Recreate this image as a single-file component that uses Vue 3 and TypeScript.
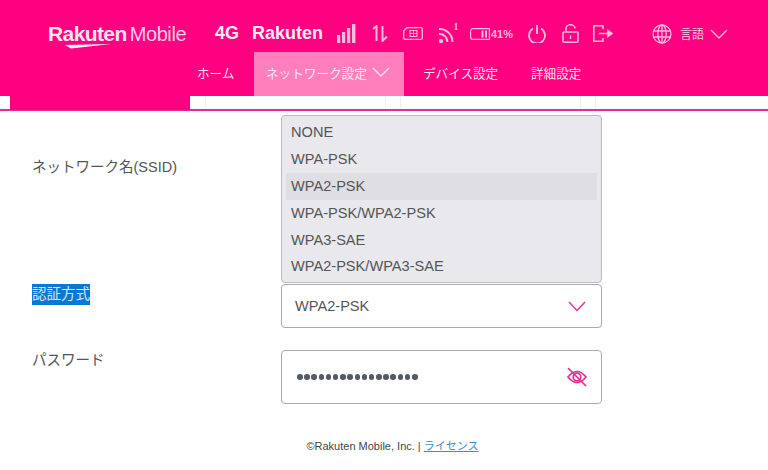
<script setup lang="ts">
const options: string[] = ['NONE', 'WPA-PSK', 'WPA2-PSK', 'WPA-PSK/WPA2-PSK', 'WPA3-SAE', 'WPA2-PSK/WPA3-SAE']
const selected = 'WPA2-PSK'
const navItems = [
  { label: 'ホーム', cls: 'home' },
  { label: 'ネットワーク設定', cls: 'network active', arrow: true },
  { label: 'デバイス設定', cls: 'device' },
  { label: '詳細設定', cls: 'detail' },
]
</script>

<template>
  <div class="page">
    <header class="header">
      <div class="top">
        <div class="logo"><span class="rakuten">Rakuten</span><span class="mobile">Mobile</span>
          <svg class="swoosh" width="46" height="5" viewBox="0 0 46 5"><path d="M0 1 L46 0 L6 4.5 Z" fill="#fff" /></svg>
        </div>
        <span class="net">4G</span>
        <span class="carrier">Rakuten</span>
        <svg class="ic signal" width="19" height="19" viewBox="0 0 19 19" fill="#fbd">
          <rect x="0" y="11" width="3.2" height="8" /><rect x="5" y="8" width="3.2" height="11" /><rect x="10" y="4" width="3.2" height="15" /><rect x="15" y="0" width="3.4" height="19" />
        </svg>
        <svg class="ic updown" width="16" height="17" viewBox="0 0 16 17" fill="none" stroke="#fbd" stroke-width="2">
          <path d="M1 4 L4.5 1 V16" /><path d="M10.5 1 V16 L15 11.5" />
        </svg>
        <svg class="ic sim" width="20" height="13" viewBox="0 0 20 13" fill="none" stroke="#fbd" stroke-width="1.3">
          <path d="M4 .7 H18 a1.3 1.3 0 0 1 1.3 1.3 V11 a1.3 1.3 0 0 1 -1.3 1.3 H2 a1.3 1.3 0 0 1 -1.3 -1.3 V4 Z" /><rect x="7" y="3.5" width="7" height="6" stroke-width="1" /><path d="M7 6.5 H14 M10.5 3.5 V9.5" stroke-width=".8" />
        </svg>
        <svg class="ic wifi" width="20" height="21" viewBox="0 0 20 21" fill="none" stroke="#fbd" stroke-width="2">
          <circle cx="3" cy="18" r="2.2" fill="#fbd" stroke="none" />
          <path d="M1 11 a8 8 0 0 1 8.5 8" /><path d="M1 6 a13 13 0 0 1 13.5 13" />
          <text x="15.5" y="7" class="wifi-num">1</text>
        </svg>
        <svg class="ic battery" width="20" height="12" viewBox="0 0 20 12" fill="none" stroke="#fbd" stroke-width="1.2">
          <path d="M3 .6 H19.4 V11.4 H3 a2.4 2.4 0 0 1 -2.4 -2.4 V3 a2.4 2.4 0 0 1 2.4 -2.4 Z" />
          <path d="M12.5 2.5 V9.5 M16 2.5 V9.5" stroke-width="2" />
        </svg>
        <span class="pct">41%</span>
        <svg class="ic power" width="18" height="18" viewBox="0 0 18 18" fill="none" stroke="#fbd" stroke-width="1.8">
          <path d="M5 3.5 a8 8 0 1 0 8 0" /><path d="M9 0 V9" />
        </svg>
        <svg class="ic lock" width="17" height="19" viewBox="0 0 17 19" fill="none" stroke="#fbd" stroke-width="1.5">
          <rect x="1" y="8" width="15" height="10.2" rx="1" /><path d="M4 8 V4.5 a4.5 3.8 0 0 1 9 0" /><path d="M8.5 11.5 V15" />
        </svg>
        <svg class="ic logout" width="20" height="17" viewBox="0 0 20 17" fill="none" stroke="#fbd" stroke-width="1.5">
          <path d="M10 4 V.8 H.8 V16.2 H10 V13" /><path d="M6 8.5 H15" /><path d="M15 5.5 L19 8.5 L15 11.5 Z" fill="#fbd" />
        </svg>
        <svg class="ic globe" width="20" height="20" viewBox="0 0 20 20" fill="none" stroke="#fbd" stroke-width="1.3">
          <circle cx="10" cy="10" r="9" /><ellipse cx="10" cy="10" rx="4.2" ry="9" /><path d="M10 1 V19 M1.5 7 H18.5 M1.5 13 H18.5" />
        </svg>
        <span class="lang">言語</span>
        <svg class="lang-arrow" width="18" height="10" viewBox="0 0 18 10" fill="none" stroke="#fbd" stroke-width="1.4"><path d="M1 1 L9 9 L17 1" /></svg>
      </div>
      <nav class="nav">
        <a v-for="item in navItems" :key="item.label" :class="['nav-item', item.cls]">
          {{ item.label }}
          <svg v-if="item.arrow" class="nav-arrow" width="18" height="10" viewBox="0 0 18 10" fill="none" stroke="#ffe0ee" stroke-width="1.4"><path d="M1 1 L9 9 L17 1" /></svg>
        </a>
      </nav>
    </header>
    <div class="strip">
      <div class="strip-block"></div>
      <div class="strip-cell c1"></div>
      <div class="strip-cell c2"></div>
      <div class="strip-cell c3"></div>
      <div class="strip-cell c4"></div>
      <div class="strip-cell c5"></div>
    </div>
    <main class="form">
      <div class="row first">
        <label class="label ssid">ネットワーク名(SSID)</label>
        <ul class="list">
          <li v-for="o in options" :key="o" :class="{ sel: o === selected }">{{ o }}</li>
        </ul>
      </div>
      <div class="row second">
        <label class="label auth"><span class="highlight">認証方式</span></label>
        <div class="control select">
          <span>WPA2-PSK</span>
          <svg width="18" height="11" viewBox="0 0 18 11" fill="none" stroke="#e6308f" stroke-width="1.5"><path d="M1 1 L9 9.5 L17 1" /></svg>
        </div>
      </div>
      <div class="row third">
        <label class="label pw">パスワード</label>
        <div class="control password">
          <span class="dots"><i v-for="n in 17" :key="n"></i></span>
          <svg width="20" height="20" viewBox="0 0 20 20" fill="none" stroke="#e6308f" stroke-width="1.7">
            <path d="M1 10 Q10 -1 19 10 Q10 21 1 10 Z" /><circle cx="10" cy="10" r="3.8" /><path d="M1 1 L19 19" />
          </svg>
        </div>
      </div>
    </main>
    <footer class="footer">©Rakuten Mobile, Inc. | <a class="license">ライセンス</a></footer>
  </div>
</template>

<style>
html, body { margin: 0; background: #fff; }
</style>

<style scoped>
.page {
  width: 768px;
  height: 470px;
  overflow: hidden;
  background: #fff;
  font-family: "Liberation Sans", "Noto Sans CJK JP", sans-serif;
  color: #555;
}
.header { height: 96px; background: #ff0080; display: flex; flex-direction: column; }
.top { height: 52px; display: flex; align-items: center; padding-left: 48px; padding-top: 15px; box-sizing: border-box; color: #fff; }
.logo { width: 167px; position: relative; color: #fbe6f0; white-space: nowrap; }
.rakuten { font-size: 21px; font-weight: 700; letter-spacing: -0.6px; }
.mobile { font-size: 20px; margin-left: 3px; letter-spacing: -0.4px; color: #fbcfe4; }
.swoosh { position: absolute; left: 17px; top: 22px; }
.net { font-size: 18px; font-weight: 700; width: 37px; color: #fdeef5; }
.carrier { font-size: 18px; font-weight: 700; width: 85px; color: #fdeef5; }
.ic { flex: none; }
.signal { margin-right: 16px; }
.updown { margin-right: 15px; }
.sim { margin-right: 15px; }
.wifi { margin-right: 12px; overflow: visible; }
.wifi-num { font-size: 10px; fill: #fbd; stroke: none; font-family: "Liberation Serif", serif; font-weight: 700; }
.pct { font-size: 11px; font-weight: 700; margin-left: 1px; width: 37px; color: #fbd; }
.power { margin-right: 16px; }
.lock { margin-right: 14px; }
.logout { margin-right: 39px; }
.lang { font-size: 12px; margin-left: 8px; color: #fbcfe4; }
.lang-arrow { margin-left: 6px; }
.nav { height: 44px; display: flex; padding-left: 197px; }
.nav-item { display: flex; align-items: center; font-size: 12.6px; color: #fde3ef; white-space: nowrap; padding-bottom: 4px; box-sizing: border-box; }
.home { width: 57px; }
.network { width: 150px; background: #ff7fbd; padding-left: 12px; color: #ffe6f2; }
.device { margin-left: 19px; width: 108px; }
.nav-arrow { margin-left: 5px; }
.strip { height: 15px; display: flex; box-sizing: border-box; border-bottom: 2px solid #e6308f; }
.strip-block { width: 180px; margin-left: 10px; height: 14px; background: #ff0080; }
.strip-cell { height: 12px; border-left: 1px solid #eee; box-sizing: border-box; }
.c1 { margin-left: 15px; width: 180px; }
.c2 { width: 15px; }
.c3 { width: 180px; }
.c4 { width: 15px; }
.c5 { flex: 1; }
.form { padding: 4px 166px 0 32px; }
.row { display: grid; grid-template-columns: 249px 321px; }
.second { margin-top: 1px; }
.third { margin-top: 22px; }
.label { font-size: 14.5px; line-height: 20px; color: #555; }
.ssid { padding-top: 42px; }
.auth { margin-top: 0; }
.highlight { background: #0a78d2; color: #cfe6f8; display: inline-block; height: 21px; line-height: 20px; }
.list {
  list-style: none;
  margin: 0;
  padding: 3.4px 4px 0;
  height: 168px;
  box-sizing: border-box;
  background: #e8e8ed;
  border: 1px solid #bbb;
  border-radius: 4px;
  font-size: 14.6px;
}
.list li { height: 26.8px; line-height: 27px; padding-left: 5px; color: #555; }
.list li.sel { background: #dedee3; }
.control { box-sizing: border-box; border: 1px solid #aaa; border-radius: 4px; display: flex; align-items: center; justify-content: space-between; background: #fff; }
.select { height: 44px; padding: 0 15px 0 13px; font-size: 14.6px; color: #555; }
.password { height: 54px; padding: 0 14px 0 15px; }
.dots { display: flex; gap: 1.7px; }
.dots i { width: 5.5px; height: 5.5px; border-radius: 50%; background: #555b66; display: block; }
.footer { margin-top: 34px; text-align: center; font-size: 11px; color: #444; line-height: 16px; padding-left: 17px; }
.license { color: #3a8fc4; text-decoration: underline; }
</style>
